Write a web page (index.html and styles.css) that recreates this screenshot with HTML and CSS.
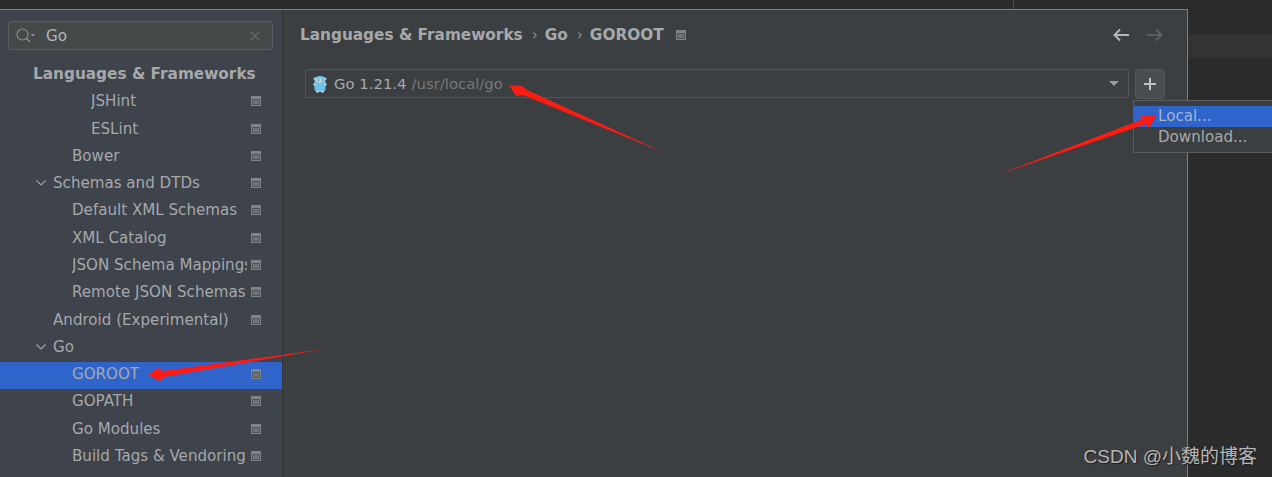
FILE: index.html
```html
<!DOCTYPE html>
<html lang="zh">
<head>
  <meta charset="UTF-8">
  <title>Settings - GOROOT</title>
  <link rel="stylesheet" href="styles.css">
</head>
<body>
  <div class="topbar"><span class="topbar-line"></span></div>

  <div class="desk">
    <div class="dialog">
      <aside class="sidebar">
        <div class="search">
          <svg class="search-icon" width="20" height="16" viewBox="0 0 20 16">
            <circle cx="6.500" cy="6.500" r="5.500" fill="none" stroke="#8c8f91" stroke-width="1.200"/>
            <path d="M10.500 10.500l3.500 3.500" stroke="#8c8f91" stroke-width="1.400"/>
            <path d="M14.500 6h5L17 8.500z" fill="#8c8f91"/>
          </svg>
          <span class="search-text">Go</span>
          <svg class="search-clear" width="10" height="10" viewBox="0 0 10 10">
            <path d="M.5.500l9 9M9.500.500l-9 9" stroke="#696c6e" stroke-width="1.100"/>
          </svg>
        </div>

        <div class="tree">
          <div class="row row-head"><span class="label">Languages &amp; Frameworks</span></div>
          <div class="row lvl3"><span class="label">JSHint</span><span class="pin"></span></div>
          <div class="row lvl3"><span class="label">ESLint</span><span class="pin"></span></div>
          <div class="row lvl2"><span class="label">Bower</span><span class="pin"></span></div>
          <div class="row lvl1">
            <svg class="chevron" width="12" height="8" viewBox="0 0 12 8"><path d="M1.500 1.500L6 6l4.500-4.500" fill="none" stroke="#a0a3a5" stroke-width="1.200"/></svg>
            <span class="label">Schemas and DTDs</span><span class="pin"></span>
          </div>
          <div class="row lvl2"><span class="label">Default XML Schemas</span><span class="pin"></span></div>
          <div class="row lvl2"><span class="label">XML Catalog</span><span class="pin"></span></div>
          <div class="row lvl2"><span class="label">JSON Schema Mappings</span><span class="pin"></span></div>
          <div class="row lvl2"><span class="label">Remote JSON Schemas</span><span class="pin"></span></div>
          <div class="row lvl1"><span class="label">Android (Experimental)</span><span class="pin"></span></div>
          <div class="row lvl1">
            <svg class="chevron" width="12" height="8" viewBox="0 0 12 8"><path d="M1.500 1.500L6 6l4.500-4.500" fill="none" stroke="#a0a3a5" stroke-width="1.200"/></svg>
            <span class="label">Go</span>
          </div>
          <div class="row lvl2 selected"><span class="label">GOROOT</span><span class="pin"></span></div>
          <div class="row lvl2"><span class="label">GOPATH</span><span class="pin"></span></div>
          <div class="row lvl2"><span class="label">Go Modules</span><span class="pin"></span></div>
          <div class="row lvl2"><span class="label">Build Tags &amp; Vendoring</span><span class="pin"></span></div>
        </div>
      </aside>

      <main class="content">
        <div class="crumbs">
          <b>Languages &amp; Frameworks</b>
          <span class="sep">›</span>
          <b>Go</b>
          <span class="sep">›</span>
          <b>GOROOT</b>
          <span class="pin crumb-pin"></span>
          <span class="nav">
            <svg width="18" height="14" viewBox="0 0 18 14"><path d="M17 7H3M8 1.500L2.500 7 8 12.500" fill="none" stroke="#b4b7b9" stroke-width="2"/></svg>
            <svg width="18" height="14" viewBox="0 0 18 14"><path d="M1 7h14M10 1.500L15.500 7 10 12.500" fill="none" stroke="#5c5f61" stroke-width="2"/></svg>
          </span>
        </div>

        <div class="sdk-line">
          <div class="sdk-select">
            <svg class="gopher" width="14" height="18" viewBox="0 0 14 18">
              <path d="M1.500 5C1.500 2 4 1 7 1s5.500 1 5.500 4v9.500C12.500 16 10 17 7 17s-5.500-1-5.500-2.500z" fill="#6fc3ea"/>
              <rect x="0.500" y="2.500" width="2.500" height="2.500" rx="1" fill="#9fc9dc"/>
              <rect x="11" y="2.500" width="2.500" height="2.500" rx="1" fill="#9fc9dc"/>
              <rect x="0.500" y="8" width="2" height="3" rx="1" fill="#d8d0b8"/>
              <rect x="11.500" y="8" width="2" height="3" rx="1" fill="#d8d0b8"/>
              <circle cx="5" cy="5" r="1.600" fill="#fff"/>
              <circle cx="9" cy="5" r="1.600" fill="#fff"/>
              <circle cx="5.300" cy="5" r=".7" fill="#222"/>
              <circle cx="9.300" cy="5" r=".7" fill="#222"/>
              <rect x="6" y="6.500" width="2" height="1.500" fill="#e8dcc0"/>
              <rect x="3" y="16" width="3" height="1.500" fill="#d8d0b8"/>
              <rect x="8" y="16" width="3" height="1.500" fill="#d8d0b8"/>
            </svg>
            <span class="sdk-name">Go 1.21.4</span>
            <span class="sdk-path">/usr/local/go</span>
            <span class="caret"></span>
          </div>
          <div class="add-btn">
            <svg width="12" height="12" viewBox="0 0 12 12"><path d="M6 0v12M0 6h12" stroke="#c0c3c5" stroke-width="2"/></svg>
          </div>
        </div>
      </main>
    </div>

    <div class="backdrop">
      <div class="backdrop-band"></div>
    </div>
  </div>

  <div class="popup">
    <div class="popup-item active">Local...</div>
    <div class="popup-item">Download...</div>
  </div>

  <svg class="arrows" width="1272" height="477" viewBox="0 0 1272 477">
    <polygon points="665,153 527,90 522,86 509,85 516,96 523,95" fill="#fe1b12"/>
    <polygon points="997,175 1143,119 1140,116 1156,116 1149,128 1146,124" fill="#fe1b12"/>
    <polygon points="325,349 163,371 158,368 148,375 160,381 164,377" fill="#fe1b12"/>
  </svg>

  <div class="watermark">CSDN @小魏的博客</div>
</body>
</html>
```

FILE: styles.css
```css
html, body {
  margin: 0;
  height: 477px;
  overflow: hidden;
}

body {
  position: relative;
  background-color: #2b2b2b;
  color: #a6a9ab;
  font-family: 'DejaVu Sans', sans-serif;
  font-size: 15.1px;
}

svg {
  display: block;
  flex-shrink: 0;
}

.topbar {
  height: 9px;
  padding-left: 1013px;
}

.topbar-line {
  display: block;
  width: 1px;
  height: 9px;
  background-color: #4a4c4e;
}

.desk {
  display: flex;
  height: 468px;
}

.dialog {
  display: flex;
  width: 1187px;
  border-top: 1px solid #4b8ac9;
  border-right: 1px solid #4b8ac9;
  background-color: #3c3f41;
}

.sidebar {
  width: 282px;
  background-color: #3e434c;
  border-right: 1px solid #323437;
  flex-shrink: 0;
  padding-top: 11px;
}

.search {
  display: flex;
  align-items: center;
  height: 27px;
  margin: 0 9px 0 8px;
  padding: 0 12px 0 7px;
  background-color: #45494a;
  border: 1px solid #5a5d5f;
  border-radius: 3px;
}

.search-text {
  flex: 1;
  margin-left: 10px;
  color: #b4b7b9;
}

.row {
  display: flex;
  align-items: center;
  box-sizing: border-box;
  height: 27.27px;
  padding-right: 21px;
  padding-bottom: 3px;
  white-space: nowrap;
}

.tree {
  margin-top: 12px;
}

.row-head {
  padding-left: 33px;
  font-weight: bold;
  font-size: 15.3px;
}

.lvl1 { padding-left: 53px; }
.lvl2 { padding-left: 72px; }
.lvl3 { padding-left: 91px; }

.chevron {
  margin: 0 6px 0 -18px;
}

.label {
  flex: 1;
  min-width: 0;
  overflow: hidden;
}

.row.selected {
  background-color: #2f65ca;
}

.pin {
  width: 10px;
  height: 10px;
  margin-left: 4px;
  flex-shrink: 0;
  box-sizing: border-box;
  background-color: #6d7378;
  border: 1px solid #7f8489;
  border-top-width: 3px;
  box-shadow: inset 0 0 0 1px #4f5559;
}

.content {
  flex: 1;
  min-width: 0;
  padding: 0 22px 0 17px;
}

.crumbs {
  display: flex;
  align-items: center;
  height: 49px;
  gap: 6px;
}

.crumbs b {
  font-size: 15.3px;
}

.sep {
  margin: 0 1px 0 3px;
  color: #8c8f91;
}

.crumb-pin {
  margin-left: 6px;
}

.nav {
  display: flex;
  gap: 16px;
  margin-left: auto;
  margin-right: 1px;
}

.sdk-line {
  display: flex;
  gap: 6px;
  margin-top: 10px;
  padding-left: 5px;
}

.sdk-select {
  display: flex;
  align-items: center;
  flex: 1;
  height: 27px;
  padding: 0 9px 0 7px;
  border: 1px solid #55585a;
  border-radius: 3px;
  font-size: 14.85px;
}

.gopher {
  margin-right: 7px;
}

.sdk-name {
  margin-right: 5px;
}

.sdk-path {
  color: #77797b;
  flex: 1;
}

.caret {
  width: 0;
  height: 0;
  border-left: 5px solid transparent;
  border-right: 5px solid transparent;
  border-top: 5px solid #9a9d9f;
}

.add-btn {
  display: flex;
  align-items: center;
  justify-content: center;
  width: 28px;
  height: 28px;
  background-color: #4a4e50;
  border: 1px solid #55585a;
  border-radius: 4px;
}

.backdrop {
  flex: 1;
  padding-top: 25px;
}

.backdrop-band {
  height: 24px;
  background-color: #313335;
}

.popup {
  position: absolute;
  left: 1133px;
  top: 100px;
  width: 139px;
  height: 53px;
  box-sizing: border-box;
  padding-top: 5px;
  background-color: #3c3f41;
  border: 1px solid #5a5d5f;
  border-right: 0;
}

.popup-item {
  height: 21px;
  line-height: 20px;
  padding-left: 24px;
}

.popup-item.active {
  background-color: #2f65ca;
  color: #a3b4d2;
}

.arrows {
  position: absolute;
  left: 0;
  top: 0;
  pointer-events: none;
}

.watermark {
  position: absolute;
  right: 15px;
  top: 445px;
  font-family: 'Liberation Sans', 'Noto Sans CJK SC', sans-serif;
  font-size: 19px;
  line-height: 24px;
  color: #b5b5b5;
  text-shadow: 1px 1px 1px #1c1c1c;
}
```
